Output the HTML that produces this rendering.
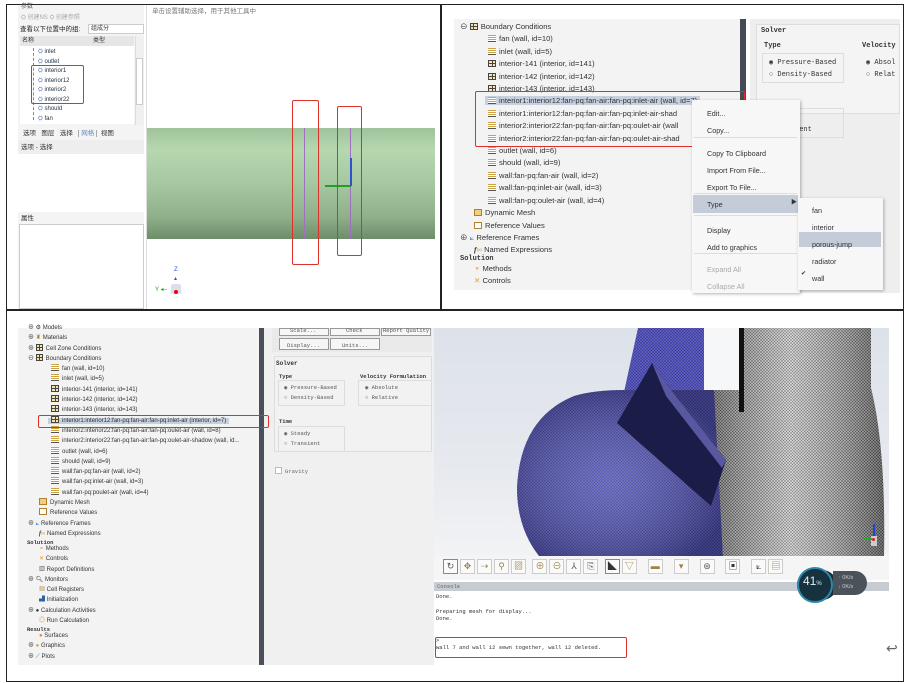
<!DOCTYPE html>
<html><head><meta charset="utf-8">
<style>
*{margin:0;padding:0;box-sizing:border-box}
body{width:906px;height:683px;background:#fff;position:relative;overflow:hidden;font-family:"Liberation Sans","Noto Sans CJK SC",sans-serif;color:#333}
.a{position:absolute}
.t{position:absolute;white-space:nowrap;font-size:7px;line-height:9px}
.m{font-family:"Liberation Mono",monospace}
.rb{position:absolute;border:1.5px solid #e0302a;border-radius:2px}
.ic{display:inline-block;width:8px;height:7px;vertical-align:-1px;margin-right:3px}
.wl{background:repeating-linear-gradient(#c9a24a 0 1px,#fff 1px 2px);border-bottom:1px solid #555}
.bx{border:1px solid #444;background:linear-gradient(#444,#444) center/100% 1px no-repeat,linear-gradient(#444,#444) center/1px 100% no-repeat,#f6e3b0}
.r2{font-size:7.6px;line-height:12.4px}
.r3{font-size:6px;line-height:10.3px}
.tb{display:inline-block;width:15px;height:15px;border:1px solid #ccc;background:#fafafa;margin-right:2px;text-align:center;font-size:9px;line-height:13px;color:#a08040;vertical-align:top}
</style></head><body>
<div class="a" style="left:6px;top:4px;width:898px;height:678px;border:1.5px solid #222"></div>
<div class="a" style="left:440px;top:4px;width:1.5px;height:306px;background:#222"></div>
<div class="a" style="left:6px;top:309px;width:898px;height:1.5px;background:#222"></div>

<!-- TOP LEFT -->
<div class="a" style="left:18px;top:5px;width:126px;height:304px;background:#f4f4f4"></div>
<div class="t" style="left:21px;top:3px;font-size:6px;color:#555">参数</div>
<div class="t" style="left:21px;top:14px;font-size:6px;color:#aaa">⛭ 创建NS ⛭ 创建参照</div>
<div class="t" style="left:20px;top:25px;font-size:6.5px;color:#222">查看以下位置中的组:</div>
<div class="a" style="left:88px;top:24px;width:56px;height:10px;background:#fff;border:1px solid #ccc"></div>
<div class="t" style="left:91px;top:25px;font-size:6px">组成分</div>
<div class="a" style="left:20px;top:36px;width:114px;height:10px;background:#e6e6e6"></div>
<div class="t" style="left:22px;top:37px;font-size:6px">名称</div>
<div class="t" style="left:93px;top:37px;font-size:6px">类型</div>
<div class="a" style="left:20px;top:46px;width:114px;height:78px;background:#fff"></div>
<div class="a" style="left:135px;top:36px;width:9px;height:89px;background:#f0f0f0;border-left:1px solid #ddd"></div>
<div class="a" style="left:136px;top:58px;width:7px;height:47px;background:#fff;border:1px solid #ccc"></div>
<div class="a" style="left:33px;top:48px;width:1px;height:72px;border-left:1px dashed #888"></div>
<div class="t" style="left:38px;top:48px;font-size:6px;line-height:9.5px;color:#234">
<span style="color:#5a7ab0">⛭</span> inlet<br><span style="color:#5a7ab0">⛭</span> outlet<br><span style="color:#5a7ab0">⛭</span> interior1<br><span style="color:#5a7ab0">⛭</span> interior12<br><span style="color:#5a7ab0">⛭</span> interior2<br><span style="color:#5a7ab0">⛭</span> interior22<br><span style="color:#5a7ab0">⛭</span> should<br><span style="color:#5a7ab0">⛭</span> fan</div>
<div class="rb" style="left:31px;top:65px;width:53px;height:39px"></div>
<div class="t" style="left:23px;top:129px;font-size:6.5px;color:#333">选项&nbsp;&nbsp; 图层&nbsp;&nbsp; 选择&nbsp;&nbsp; <span style="color:#6a8fc0;border-left:1px solid #aaa;border-right:1px solid #aaa;padding:0 2px">网格</span>&nbsp; 视图</div>
<div class="a" style="left:18px;top:140px;width:126px;height:14px;background:#eee"></div>
<div class="t" style="left:21px;top:143px;font-size:6.5px">选项 - 选择</div>
<div class="a" style="left:18px;top:154px;width:126px;height:58px;background:#fff"></div>
<div class="t" style="left:21px;top:214px;font-size:6.5px">属性</div>
<div class="a" style="left:19px;top:224px;width:125px;height:85px;background:#fff;border:1px solid #ccc"></div>
<div class="a" style="left:146px;top:5px;width:1px;height:304px;background:#ddd"></div>
<div class="t" style="left:152px;top:7px;font-size:6.5px;color:#777">单击设置辅助选择，用于其他工具中</div>
<div class="a" style="left:147px;top:128px;width:288px;height:111px;background:linear-gradient(#9fc39a,#b6d8b0 20%,#a6c8a0 50%,#8fb08a 80%,#6e8d6a)"></div>
<div class="a" style="left:304px;top:128px;width:1px;height:111px;background:#a070c0"></div>
<div class="a" style="left:350px;top:128px;width:1px;height:111px;background:#a070c0"></div>
<div class="a" style="left:325px;top:185px;width:26px;height:1.5px;background:#2a9a2a"></div>
<div class="a" style="left:350px;top:158px;width:1.5px;height:28px;background:#3050d0"></div>
<div class="rb" style="left:292px;top:100px;width:27px;height:165px"></div>
<div class="rb" style="left:337px;top:106px;width:25px;height:150px"></div>
<div class="t" style="left:155px;top:286px;font-size:6px;color:#2a9a2a">Y ◂–</div>
<div class="t" style="left:174px;top:266px;font-size:6px;color:#3050d0">Z<br>▴</div>
<div class="a" style="left:171px;top:284px;width:10px;height:10px;background:#dde;border-radius:2px"></div>
<div class="a" style="left:174px;top:290px;width:4px;height:4px;background:#e00;border-radius:50%"></div>

<!-- TOP RIGHT -->
<div class="a" style="left:454px;top:19px;width:287px;height:274px;background:#f3f3f3"></div>
<div class="a" style="left:740px;top:19px;width:6px;height:274px;background:#454a55"></div>
<div class="a" style="left:750px;top:19px;width:150px;height:274px;background:#eeeeee"></div>
<div class="a" style="left:756px;top:24px;width:144px;height:90px;border:1px solid #ddd;background:#f4f4f4"></div>
<div class="t m" style="left:761px;top:27px;font-size:7px;font-weight:bold">Solver</div>
<div class="t m" style="left:764px;top:42px;font-size:7px;font-weight:bold">Type</div>
<div class="t m" style="left:862px;top:42px;font-size:7px;font-weight:bold">Velocity</div>
<div class="a" style="left:762px;top:53px;width:82px;height:30px;border:1px solid #ddd"></div>
<div class="t m" style="left:769px;top:57px;font-size:7px;line-height:12px">◉ Pressure-Based<br>○ Density-Based</div>
<div class="t m" style="left:866px;top:57px;font-size:7px;line-height:12px">◉ Absol<br>○ Relat</div>
<div class="a" style="left:762px;top:108px;width:82px;height:30px;border:1px solid #ddd"></div>
<div class="t m" style="left:795px;top:112px;font-size:7px;line-height:12px">y<br>ient</div>
<div class="t r2" style="left:460px;top:21px">
<span>⊖ <span class="ic bx"></span>Boundary Conditions</span><br>
<span style="margin-left:28px"><span class="ic wl"></span>fan (wall, id=10)</span><br>
<span style="margin-left:28px"><span class="ic wl"></span>inlet (wall, id=5)</span><br>
<span style="margin-left:28px"><span class="ic bx"></span>interior-141 (interior, id=141)</span><br>
<span style="margin-left:28px"><span class="ic bx"></span>interior-142 (interior, id=142)</span><br>
<span style="margin-left:28px"><span class="ic bx"></span>interior-143 (interior, id=143)</span><br>
<span style="margin-left:25px;background:#c7d0de;padding:0 3px"><span class="ic wl"></span>interior1:interior12:fan-pq:fan-air:fan-pq:inlet-air (wall, id=7)</span><br>
<span style="margin-left:28px"><span class="ic wl"></span>interior1:interior12:fan-pq:fan-air:fan-pq:inlet-air-shad</span><br>
<span style="margin-left:28px"><span class="ic wl"></span>interior2:interior22:fan-pq:fan-air:fan-pq:oulet-air (wall</span><br>
<span style="margin-left:28px"><span class="ic wl"></span>interior2:interior22:fan-pq:fan-air:fan-pq:oulet-air-shad</span><br>
<span style="margin-left:28px"><span class="ic wl"></span>outlet (wall, id=6)</span><br>
<span style="margin-left:28px"><span class="ic wl"></span>should (wall, id=9)</span><br>
<span style="margin-left:28px"><span class="ic wl"></span>wall:fan-pq:fan-air (wall, id=2)</span><br>
<span style="margin-left:28px"><span class="ic wl"></span>wall:fan-pq:inlet-air (wall, id=3)</span><br>
<span style="margin-left:28px"><span class="ic wl"></span>wall:fan-pq:oulet-air (wall, id=4)</span><br>
<span style="margin-left:14px"><span class="ic" style="background:#f0d080;border:1px solid #b08030"></span>Dynamic Mesh</span><br>
<span style="margin-left:14px"><span class="ic" style="background:#fff;border:1px solid #b08030"></span>Reference Values</span><br>
<span>⊕ <span style="color:#3070c0">⟀</span> Reference Frames</span><br>
<span style="margin-left:14px"><i style="font-family:'Liberation Serif';font-weight:bold">f</i><span style="color:#d0a040">∞</span> Named Expressions</span></div>
<div class="t m" style="left:460px;top:255px;font-size:7px;font-weight:bold">Solution</div>
<div class="t r2" style="left:474px;top:263px"><span style="color:#d09030">⚬</span> Methods<br><span style="color:#e0a030">✕</span> Controls<br>▧ Report Definitions</div>
<div class="a" style="left:454px;top:290px;width:287px;height:8px;background:#fff"></div>
<div class="rb" style="left:475px;top:91px;width:270px;height:56px"></div>
<div class="a" style="left:692px;top:100px;width:108px;height:193px;background:#f7f7f7;box-shadow:1px 1px 3px rgba(0,0,0,.3)"></div>
<div class="t r2" style="left:707px;top:105px;font-size:7.2px;line-height:17px">Edit...<br>Copy...</div>
<div class="a" style="left:694px;top:137px;width:103px;height:1px;background:#ddd"></div>
<div class="t" style="left:707px;top:145px;font-size:7.2px;line-height:17px">Copy To Clipboard<br>Import From File...<br>Export To File...</div>
<div class="a" style="left:694px;top:193px;width:103px;height:1px;background:#ddd"></div>
<div class="a" style="left:693px;top:195px;width:105px;height:18px;background:#c3ccd8"></div>
<div class="t" style="left:707px;top:200px;font-size:7.2px">Type</div>
<div class="t" style="left:791px;top:199px;font-size:6px">▶</div>
<div class="a" style="left:694px;top:215px;width:103px;height:1px;background:#ddd"></div>
<div class="t" style="left:707px;top:222px;font-size:7.2px;line-height:17px">Display<br>Add to graphics</div>
<div class="a" style="left:694px;top:253px;width:103px;height:1px;background:#ddd"></div>
<div class="t" style="left:707px;top:261px;font-size:7.2px;line-height:17px;color:#aaa">Expand All<br>Collapse All</div>
<div class="a" style="left:798px;top:198px;width:85px;height:92px;background:#f7f7f7;box-shadow:1px 1px 3px rgba(0,0,0,.3)"></div>
<div class="a" style="left:799px;top:232px;width:82px;height:15px;background:#c3ccd8"></div>
<div class="t" style="left:812px;top:202px;font-size:7.2px;line-height:17px">fan<br>interior<br>porous-jump<br>radiator<br>wall</div>
<div class="t" style="left:801px;top:270px;font-size:6px">✔</div>

<!-- BOTTOM LEFT -->
<div class="a" style="left:18px;top:328px;width:241px;height:337px;background:#f3f3f3"></div>
<div class="a" style="left:259px;top:328px;width:5px;height:337px;background:#4a505a"></div>
<div class="a" style="left:264px;top:328px;width:170px;height:337px;background:#f0f0f0"></div>
<div class="a" style="left:272px;top:328px;width:160px;height:24px;background:#eaeaea"></div>
<div class="a" style="left:279px;top:328px;width:50px;height:8px;border:1px solid #999;background:#f6f6f6"></div>
<div class="a" style="left:330px;top:328px;width:50px;height:8px;border:1px solid #999;background:#f6f6f6"></div>
<div class="a" style="left:381px;top:328px;width:50px;height:8px;border:1px solid #999;background:#f6f6f6"></div>
<div class="t m" style="left:290px;top:326px;font-size:5.5px;color:#555">Scale...</div>
<div class="t m" style="left:346px;top:326px;font-size:5.5px;color:#555">Check</div>
<div class="t m" style="left:383px;top:326px;font-size:5.5px;color:#555">Report Quality</div>
<div class="a" style="left:279px;top:338px;width:50px;height:12px;border:1px solid #999;background:#f6f6f6"></div>
<div class="a" style="left:330px;top:338px;width:50px;height:12px;border:1px solid #999;background:#f6f6f6"></div>
<div class="t m" style="left:287px;top:341px;font-size:5.5px;color:#555">Display...</div>
<div class="t m" style="left:342px;top:341px;font-size:5.5px;color:#555">Units...</div>
<div class="a" style="left:274px;top:356px;width:158px;height:96px;border:1px solid #ddd;background:#f2f2f2"></div>
<div class="t m" style="left:276px;top:359px;font-size:6px;font-weight:bold">Solver</div>
<div class="t m" style="left:279px;top:372px;font-size:5.5px;font-weight:bold">Type</div>
<div class="t m" style="left:360px;top:372px;font-size:5.5px;font-weight:bold">Velocity Formulation</div>
<div class="a" style="left:278px;top:380px;width:67px;height:26px;border:1px solid #ddd"></div>
<div class="a" style="left:358px;top:380px;width:74px;height:26px;border:1px solid #ddd"></div>
<div class="t m" style="left:284px;top:383px;font-size:5.5px;line-height:10px;color:#555">◉ Pressure-Based<br>○ Density-Based</div>
<div class="t m" style="left:365px;top:383px;font-size:5.5px;line-height:10px;color:#555">◉ Absolute<br>○ Relative</div>
<div class="t m" style="left:279px;top:417px;font-size:5.5px;font-weight:bold">Time</div>
<div class="a" style="left:278px;top:426px;width:67px;height:26px;border:1px solid #ddd"></div>
<div class="t m" style="left:284px;top:429px;font-size:5.5px;line-height:10px;color:#555">◉ Steady<br>○ Transient</div>
<div class="a" style="left:275px;top:467px;width:7px;height:7px;border:1px solid #bbb;background:#fff"></div>
<div class="t m" style="left:285px;top:467px;font-size:5.5px;color:#666">Gravity</div>
<div class="t r3" style="left:28px;top:323px">
<span>⊕ ⚙ Models</span><br>
<span>⊕ <span style="color:#b08030">♜</span> Materials</span><br>
<span>⊕ <span class="ic bx" style="width:7px;height:7px"></span>Cell Zone Conditions</span><br>
<span>⊖ <span class="ic bx" style="width:7px;height:7px"></span>Boundary Conditions</span><br>
<span style="margin-left:23px"><span class="ic wl"></span>fan (wall, id=10)</span><br>
<span style="margin-left:23px"><span class="ic wl"></span>inlet (wall, id=5)</span><br>
<span style="margin-left:23px"><span class="ic bx"></span>interior-141 (interior, id=141)</span><br>
<span style="margin-left:23px"><span class="ic bx"></span>interior-142 (interior, id=142)</span><br>
<span style="margin-left:23px"><span class="ic bx"></span>interior-143 (interior, id=143)</span><br>
<span style="margin-left:20px;background:#c7d0de;padding:0 3px"><span class="ic bx"></span>interior1:interior12:fan-pq:fan-air:fan-pq:inlet-air (interior, id=7)</span><br>
<span style="margin-left:23px"><span class="ic wl"></span>interior2:interior22:fan-pq:fan-air:fan-pq:oulet-air (wall, id=8)</span><br>
<span style="margin-left:23px"><span class="ic wl"></span>interior2:interior22:fan-pq:fan-air:fan-pq:oulet-air-shadow (wall, id...</span><br>
<span style="margin-left:23px"><span class="ic wl"></span>outlet (wall, id=6)</span><br>
<span style="margin-left:23px"><span class="ic wl"></span>should (wall, id=9)</span><br>
<span style="margin-left:23px"><span class="ic wl"></span>wall:fan-pq:fan-air (wall, id=2)</span><br>
<span style="margin-left:23px"><span class="ic wl"></span>wall:fan-pq:inlet-air (wall, id=3)</span><br>
<span style="margin-left:23px"><span class="ic wl"></span>wall:fan-pq:poulet-air (wall, id=4)</span><br>
<span style="margin-left:11px"><span class="ic" style="background:#f0d080;border:1px solid #b08030"></span>Dynamic Mesh</span><br>
<span style="margin-left:11px"><span class="ic" style="background:#fff;border:1px solid #b08030"></span>Reference Values</span><br>
<span>⊕ <span style="color:#3070c0">⟀</span> Reference Frames</span><br>
<span style="margin-left:11px"><i style="font-family:'Liberation Serif';font-weight:bold">f</i><span style="color:#d0a040">∞</span> Named Expressions</span></div>
<div class="t m" style="left:27px;top:538px;font-size:5.5px;font-weight:bold">Solution</div>
<div class="t r3" style="left:28px;top:544px">
<span style="margin-left:11px"><span style="color:#d09030">⚬</span> Methods</span><br>
<span style="margin-left:11px"><span style="color:#e0a030">✕</span> Controls</span><br>
<span style="margin-left:11px">▧ Report Definitions</span><br>
<span>⊕ 🔍︎ Monitors</span><br>
<span style="margin-left:11px"><span style="color:#b08030">▦</span> Cell Registers</span><br>
<span style="margin-left:11px"><span style="color:#3060a0">▟</span> Initialization</span><br>
<span>⊕ ● Calculation Activities</span><br>
<span style="margin-left:11px"><span style="color:#c09030">◎</span> Run Calculation</span></div>
<div class="t m" style="left:27px;top:625px;font-size:5.5px;font-weight:bold">Results</div>
<div class="t r3" style="left:28px;top:631px">
<span style="margin-left:11px"><span style="color:#d09030">●</span> Surfaces</span><br>
<span>⊕ <span style="color:#e0a030">●</span> Graphics</span><br>
<span>⊕ <span style="color:#3070c0">⟋</span> Plots</span></div>
<div class="rb" style="left:38px;top:415px;width:231px;height:13px"></div>

<!-- BOTTOM RIGHT -->
<div class="a" style="left:434px;top:328px;width:455px;height:228px;background:linear-gradient(#dde2ea,#e6e9ee 60%,#f2f3f5);overflow:hidden">
<svg width="455" height="228" style="position:absolute;left:0;top:0">
<defs>
<pattern id="mb" width="3" height="3" patternUnits="userSpaceOnUse"><rect width="3" height="3" fill="#5c5cc4"/><path d="M0 0L3 3M3 0L0 3" stroke="#23235a" stroke-width=".3"/></pattern>
<pattern id="mg" width="3" height="3" patternUnits="userSpaceOnUse"><rect width="3" height="3" fill="#c4c4c4"/><path d="M0 0L3 3M3 0L0 3" stroke="#2a2a2a" stroke-width=".35"/></pattern>
<linearGradient id="sh" x1="0" x2="1"><stop offset="0" stop-color="#000" stop-opacity=".3"/><stop offset=".45" stop-color="#fff" stop-opacity=".25"/><stop offset="1" stop-color="#000" stop-opacity=".4"/></linearGradient>
<radialGradient id="bs" cx=".45" cy=".55" r=".6"><stop offset="0" stop-color="#fff" stop-opacity=".15"/><stop offset="1" stop-color="#000" stop-opacity=".3"/></radialGradient>
</defs>
<rect x="270" y="0" width="36" height="62" fill="#f6f7f9"/>
<path d="M204 0 L270 0 L270 64 L190 64 Z" fill="url(#mb)"/>
<path d="M190 62 L282 62 L289 228 L105 228 Q83 200 83 160 Q86 90 140 68 Q160 62 190 62 Z" fill="url(#mb)"/>
<path d="M190 62 L282 62 L289 228 L105 228 Q83 200 83 160 Q86 90 140 68 Q160 62 190 62 Z" fill="url(#bs)"/>
<path d="M280 62 L305 62 L305 0 L437 0 L437 60 Q452 120 450 228 L289 228 Z" fill="url(#mg)"/>
<path d="M280 62 L305 62 L305 0 L437 0 L437 60 Q452 120 450 228 L289 228 Z" fill="url(#sh)"/>
<path d="M305 0 L310 0 L310 84 L305 84 Z" fill="#111"/>
<path d="M218 35 L183 95 L277 178 L292 132 L237 62 Z" fill="#1c1c48"/>
<path d="M218 35 L237 62 L292 132 L288 140 L232 68 Z" fill="#5858a0"/>
</svg>
<div class="a" style="left:437px;top:208px;width:6px;height:10px;background:#ccc"></div>
<div class="a" style="left:438px;top:210px;width:3px;height:3px;background:#d22;border-radius:50%"></div>
<div class="a" style="left:430px;top:210px;width:8px;height:1.5px;background:#2a2"></div>
<div class="a" style="left:439px;top:196px;width:1.5px;height:12px;background:#24c"></div>
</div>
<div class="a" style="left:434px;top:556px;width:455px;height:24px;background:#f5f5f5"></div>
<div class="a" style="left:443px;top:559px;white-space:nowrap">
<span class="tb" style="border-color:#888;color:#556">↻</span><span class="tb">✥</span><span class="tb">⇢</span><span class="tb">⚲</span><span class="tb">▨</span>&nbsp;<span class="tb">⊕</span><span class="tb">⊖</span><span class="tb" style="color:#555">⅄</span><span class="tb" style="color:#555">⎘</span>&nbsp;<span class="tb" style="border-color:#888;color:#333">◣</span><span class="tb">▽</span>&nbsp;&nbsp;<span class="tb">▬</span>&nbsp;&nbsp;<span class="tb">▾</span>&nbsp;&nbsp;<span class="tb" style="color:#555">⊛</span>&nbsp;&nbsp;<span class="tb" style="color:#333">▣</span>&nbsp;&nbsp;<span class="tb" style="color:#333">⟀</span><span class="tb">▤</span></div>
<div class="a" style="left:434px;top:582px;width:455px;height:9px;background:#c7ccd3"></div>
<div class="t m" style="left:437px;top:582px;font-size:5.5px;color:#666">Console</div>
<div class="a" style="left:434px;top:591px;width:455px;height:74px;background:#fff"></div>
<div class="t m" style="left:436px;top:593px;font-size:5.5px;line-height:7.3px;color:#333">Done.<br><br>Preparing mesh for display...<br>Done.<br><br><br>&gt;<br>wall 7 and wall 12 sewn together, wall 12 deleted.</div>
<div class="rb" style="left:435px;top:637px;width:192px;height:21px"></div>
<div class="a" style="left:797px;top:570px;width:40px;height:30px;border-radius:15px;background:#1f2a33"></div>
<div class="a" style="left:797px;top:567px;width:36px;height:36px;border-radius:50%;background:#17323f;border:2px solid #2a8aa8"></div>
<div class="t" style="left:803px;top:577px;font-size:12px;color:#e0f0f8">41<span style="font-size:6px">%</span></div>
<div class="a" style="left:833px;top:571px;width:34px;height:24px;border-radius:0 12px 12px 0;background:#4a525a"></div>
<div class="t" style="left:838px;top:574px;font-size:5.5px;line-height:9px;color:#ccc"><span style="color:#3ab">↑</span> 0K/s<br><span style="color:#ea3">↓</span> 0K/s</div>
<div class="t" style="left:886px;top:644px;font-size:14px;color:#666">↩</div>
</body></html>
